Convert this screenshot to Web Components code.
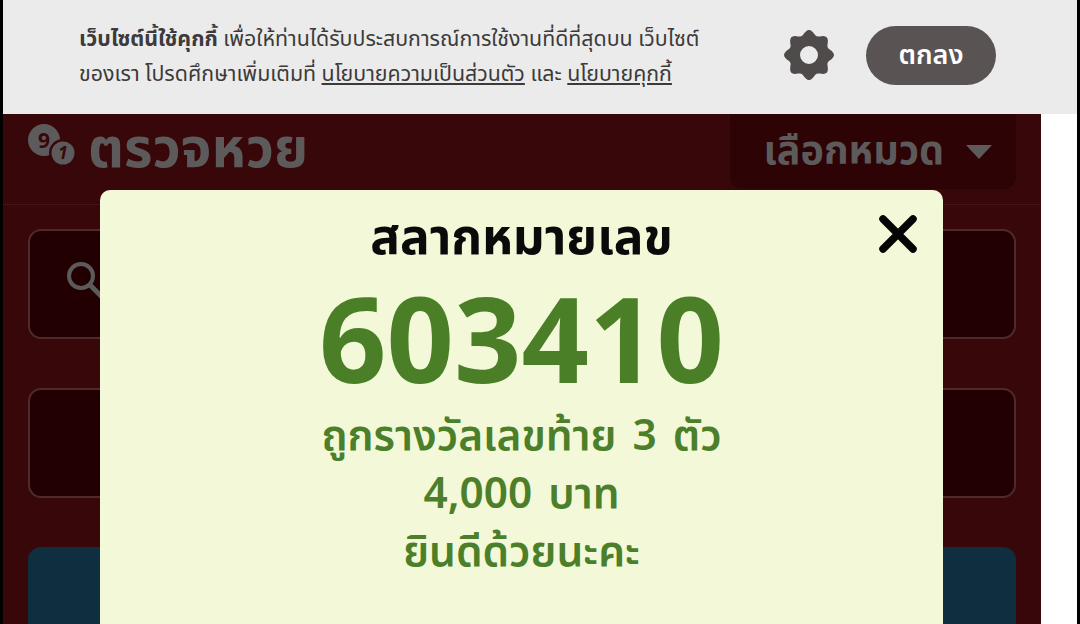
<!DOCTYPE html>
<html lang="th">
<head>
<meta charset="utf-8">
<title>ตรวจหวย</title>
<style>
  html, body { margin: 0; height: 100%; background: #000; overflow: hidden; }
  body { font-family: "Noto Sans", "Noto Sans Thai", "Noto Sans Thai Looped", sans-serif; }
</style>
</head>
<body>
<lotto-app>
  <cookie-bar slot="top"></cookie-bar>
  <lotto-page slot="main">
    <lotto-header></lotto-header>
    <lotto-field icon></lotto-field>
    <lotto-field></lotto-field>
    <lotto-submit></lotto-submit>
    <result-modal slot="over">
      <span slot="title">สลากหมายเลข</span>
      <span slot="number">603410</span>
      <span>ถูกรางวัลเลขท้าย 3 ตัว</span>
      <span>4,000 บาท</span>
      <span>ยินดีด้วยนะคะ</span>
    </result-modal>
  </lotto-page>
</lotto-app>

<script>
class LottoApp extends HTMLElement {
  constructor () {
    super()
    this.attachShadow({ mode: 'open' }).innerHTML = /*html*/`
      <style>
        :host { display: flex; flex-direction: column; height: 624px; padding: 0 3px; box-sizing: border-box; overflow: hidden; }
        .below { flex: 1; min-height: 0; display: flex; background: #fff; }
      </style>
      <slot name="top"></slot>
      <div class="below"><slot name="main"></slot></div>
    `
  }
}

class CookieBar extends HTMLElement {
  constructor () {
    super()
    // gear outline is computed so the eight lobes stay even
    let d = ''
    for (let i = 0; i < 96; i++) {
      const a = i / 96 * Math.PI * 2
      const r = 22.6 + 2.4 * Math.cos(8 * a)
      d += (i ? 'L' : 'M') + (25 + r * Math.sin(a)).toFixed(2) + ' ' + (25 - r * Math.cos(a)).toFixed(2)
    }
    d += 'Z M25 16a9 9 0 1 0 0 18a9 9 0 1 0 0-18Z'
    this.attachShadow({ mode: 'open' }).innerHTML = /*html*/`
      <style>
        :host { display: flex; align-items: center; height: 114px; background: #ebebeb; padding: 0 81px 4px 76px; box-sizing: border-box; color: #3c3a3a; position: relative; z-index: 2; }
        p { margin: 0; flex: 1; font-size: 21.35px; line-height: 35px; white-space: nowrap; }
        a { color: inherit; text-decoration: underline; }
        svg { width: 50px; height: 50px; margin-right: 32px; display: block; }
        button { width: 130px; height: 59px; border: 0; border-radius: 30px; background: #595353; color: #fff; font: 600 27px "Noto Sans", "Noto Sans Thai", sans-serif; padding: 0; }
      </style>
      <p><b>เว็บไซต์นี้ใช้คุกกี้</b> เพื่อให้ท่านได้รับประสบการณ์การใช้งานที่ดีที่สุดบน เว็บไซต์<br>ของเรา โปรดศึกษาเพิ่มเติมที่ <a>นโยบายความเป็นส่วนตัว</a> และ <a>นโยบายคุกกี้</a></p>
      <svg viewBox="0 0 50 50"><path fill="#4f4b4b" fill-rule="evenodd" d="${d}"/></svg>
      <button>ตกลง</button>
    `
  }
}

class LottoPage extends HTMLElement {
  constructor () {
    super()
    this.attachShadow({ mode: 'open' }).innerHTML = /*html*/`
      <style>
        :host { display: block; position: relative; width: 1038px; height: 510px; flex: none; background: #38070a; }
        .body { display: flex; flex-direction: column; gap: 49px; padding: 24px 25px 0; }
      </style>
      <slot name="head"></slot>
      <div class="body"><slot></slot></div>
      <slot name="over"></slot>
    `
    this.querySelector('lotto-header').slot = 'head'
  }
}

class LottoHeader extends HTMLElement {
  constructor () {
    super()
    this.attachShadow({ mode: 'open' }).innerHTML = /*html*/`
      <style>
        :host { display: flex; justify-content: space-between; height: 90px; padding: 0 25px; border-bottom: 1px solid #43151a; color: #5d5a5b; }
        .brand { display: flex; align-items: center; gap: 10px; height: 72px; font-size: 55px; font-weight: 700; }
        svg { width: 50px; height: 46px; display: block; margin-top: -6px; }
        svg text { font: 700 21px "Noto Sans", sans-serif; fill: #38070a; text-anchor: middle; }
        .pick { width: 286px; height: 75px; box-sizing: border-box; background: #2d0305; border-radius: 0 0 12px 12px; display: flex; align-items: center; justify-content: flex-end; gap: 22px; padding-right: 24px; font-size: 39.5px; font-weight: 700; }
        .arrow { width: 0; height: 0; border: 13px solid transparent; border-top: 14px solid #5d5a5b; border-bottom: 0; }
      </style>
      <div class="brand">
        <svg viewBox="0 0 50 46">
          <circle cx="16" cy="16" r="16" fill="#5d5a5b"/>
          <text x="16" y="24">9</text>
          <circle cx="35" cy="29" r="14" fill="#38070a"/>
          <circle cx="35" cy="29" r="11.5" fill="#5d5a5b"/>
          <text x="35" y="35" style="font-size:17px;font-style:italic">1</text>
        </svg>
        <span>ตรวจหวย</span>
      </div>
      <div class="pick"><span>เลือกหมวด</span><i class="arrow"></i></div>
    `
  }
}

class LottoField extends HTMLElement {
  constructor () {
    super()
    const icon = this.hasAttribute('icon')
      ? '<svg viewBox="0 0 40 40" fill="none" stroke="#5d5a5b"><circle cx="14" cy="14" r="12" stroke-width="4"/><path d="M22.5 22.5l13 13" stroke-width="5"/></svg>'
      : ''
    this.attachShadow({ mode: 'open' }).innerHTML = /*html*/`
      <style>
        :host { display: flex; align-items: center; height: 110px; box-sizing: border-box; padding-left: 37px; background: #220002; border: 2px solid #50292d; border-radius: 13px; }
        svg { width: 40px; height: 40px; display: block; margin-top: -4px; }
      </style>
      ${icon}
    `
  }
}

class LottoSubmit extends HTMLElement {
  constructor () {
    super()
    this.attachShadow({ mode: 'open' }).innerHTML = /*html*/`
      <style>
        :host { display: block; height: 110px; background: #0f2f41; border-radius: 13px; }
      </style>
    `
  }
}

class ResultModal extends HTMLElement {
  constructor () {
    super()
    this.attachShadow({ mode: 'open' }).innerHTML = /*html*/`
      <style>
        :host { position: absolute; left: 97px; top: 76px; width: 843px; height: 480px; box-sizing: border-box; background: #f3f8d9; border-radius: 10px 10px 0 0; display: flex; flex-direction: column; align-items: center; text-align: center; color: #4c7f2a; font-weight: 700; }
        .title { margin-top: 14px; height: 62px; line-height: 62px; font-size: 49.5px; color: #0a0a0a; }
        .number { height: 128px; line-height: 128px; font-size: 118px; color: #4a7f27; margin-top: 8px; }
        .lines { margin-top: 3px; font-size: 42.4px; line-height: 58px; font-weight: 600; word-spacing: 5px; }
        .lines ::slotted(span) { display: block; }
        svg { position: absolute; right: 26px; top: 25px; width: 38px; height: 38px; }
      </style>
      <div class="title"><slot name="title"></slot></div>
      <div class="number"><slot name="number"></slot></div>
      <div class="lines"><slot></slot></div>
      <svg viewBox="0 0 38 38"><path d="M4 4l30 30M34 4L4 34" stroke="#050505" stroke-width="7.5" stroke-linecap="round"/></svg>
    `
  }
}

customElements.define('lotto-app', LottoApp)
customElements.define('cookie-bar', CookieBar)
customElements.define('lotto-page', LottoPage)
customElements.define('lotto-header', LottoHeader)
customElements.define('lotto-field', LottoField)
customElements.define('lotto-submit', LottoSubmit)
customElements.define('result-modal', ResultModal)
</script>
</body>
</html>
